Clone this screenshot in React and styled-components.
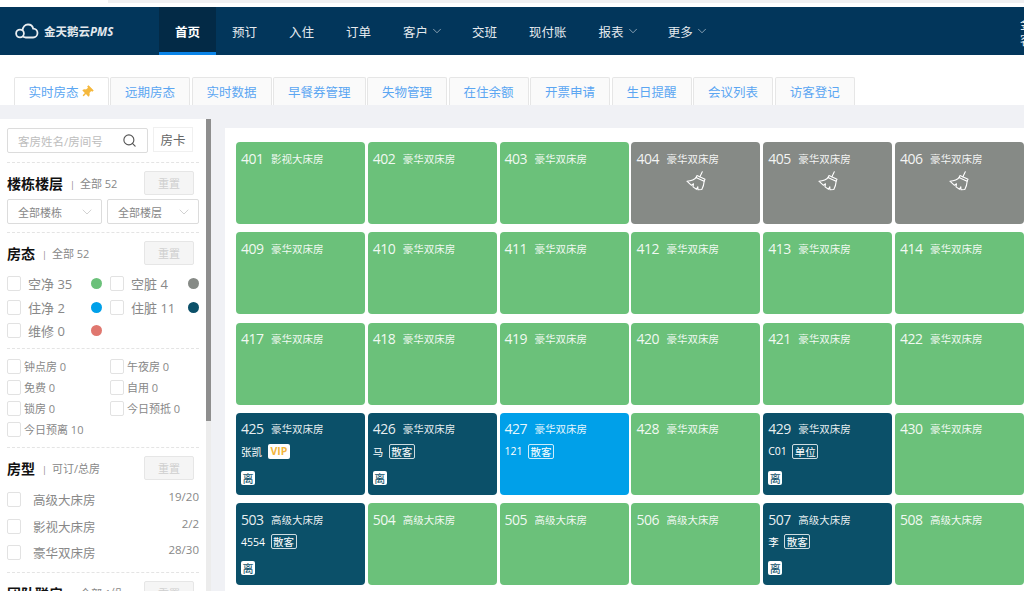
import React from 'react'
import styled, { createGlobalStyle } from 'styled-components'
import { ChevronDown, Search } from 'lucide-react'
import { FaThumbtack } from 'react-icons/fa'

const GlobalStyle = createGlobalStyle`
  html, body {
    margin: 0;
    padding: 0;
    background: #fff;
    font-family: "Open Sans", "Noto Sans CJK SC", sans-serif;
  }
  * { box-sizing: border-box; }
`

const colors = {
  clean: '#6bc17a',
  dirty: '#868a86',
  occupied: '#00a0e9',
  occupiedDirty: '#0b5069',
  repair: '#e0776f',
}

const Page = styled.div`
  width: 1024px;
  height: 591px;
  overflow: hidden;
  display: flex;
  flex-direction: column;
  background: #f0f1f5;
`

const TopStrip = styled.div`
  height: 7px;
  flex: none;
  background: #fff;
`

const StripLine = styled.div`
  height: 3px;
  margin-left: 108px;
  background: #f0f0f2;
`

const Nav = styled.div`
  height: 48px;
  flex: none;
  display: flex;
  background: #02365b;
  color: #e6ebef;
`

const Logo = styled.div`
  width: 159px;
  flex: none;
  padding-left: 15px;
  display: flex;
  align-items: center;
  gap: 5px;
  font-size: 11.5px;
  font-weight: 700;
  color: #e4e9ed;
  white-space: nowrap;
  em { font-style: italic; }
`

const NavItem = styled.div`
  height: 48px;
  padding: 0 16px;
  display: flex;
  align-items: center;
  gap: 3px;
  font-size: 12.5px;
  white-space: nowrap;
  svg { margin: 0 -4px 0 -1px; }
  ${p => p.$active && `
    background: #032a46;
    border-bottom: 3px solid #0a84e8;
    padding-top: 3px;
    font-weight: 700;
    color: #fff;
  `}
`

const NavUser = styled.div`
  margin-left: auto;
  width: 4px;
  padding-top: 10px;
  font-size: 12.5px;
  line-height: 16px;
  overflow: hidden;
  white-space: nowrap;
  display: flex;
  flex-direction: column;
`

const TabBar = styled.div`
  height: 50px;
  flex: none;
  background: #fff;
  padding: 22px 0 0 13.5px;
  display: flex;
  gap: 1.5px;
`

const Tab = styled.div`
  height: 28px;
  padding: 0 14px;
  display: flex;
  align-items: center;
  gap: 2px;
  font-size: 12.5px;
  color: #5ba6f2;
  white-space: nowrap;
  background: ${p => (p.$active ? '#fff' : '#fafafa')};
  border: 1px solid #e6e6e6;
  border-bottom: none;
  border-radius: 2px 2px 0 0;
  ${p => p.$active && 'width: 95px;'}
`

const Body = styled.div`
  flex: 1;
  min-height: 0;
  display: flex;
  padding-top: 14px;
`

const Sidebar = styled.div`
  width: 206px;
  flex: none;
  height: 472px;
  background: #fff;
  padding: 8px 7px 0;
  overflow: hidden;
`

const ScrollTrack = styled.div`
  width: 5px;
  height: 472px;
  flex: none;
  background: #ececec;
`

const ScrollThumb = styled.div`
  height: 302px;
  background: #8e8e8e;
`

const SearchRow = styled.div`
  display: flex;
  gap: 5px;
  padding-bottom: 9px;
  border-bottom: 1px dashed #e4e4e4;
`

const SearchBox = styled.div`
  width: 141px;
  height: 25px;
  margin-top: 1px;
  padding: 0 10px;
  display: flex;
  align-items: center;
  justify-content: space-between;
  font-size: 11.5px;
  color: #bdbdbd;
  border: 1px solid #dcdcdc;
  border-radius: 2px;
  svg { color: #555; }
`

const CardButton = styled.div`
  width: 40px;
  height: 25px;
  display: flex;
  align-items: center;
  justify-content: center;
  font-size: 12.5px;
  color: #666;
  border: 1px solid #f0f0f0;
`

const Section = styled.div`
  padding: ${p => p.$top || 8}px 0 ${p => p.$bottom || 8}px;
  border-bottom: 1px dashed #e4e4e4;
`

const SectionHead = styled.div`
  display: flex;
  align-items: center;
  height: 24px;
  padding-right: 5px;
`

const SectionTitle = styled.div`
  font-size: 14px;
  font-weight: 700;
  color: #111;
  white-space: nowrap;
`

const SectionNote = styled.div`
  margin-left: 7px;
  font-size: 11px;
  color: #888;
  white-space: nowrap;
  &::before {
    content: '|';
    margin-right: 5px;
    color: #888;
    font-size: 9px;
  }
`

const ResetButton = styled.div`
  margin-left: auto;
  width: 50px;
  height: 24px;
  flex: none;
  display: flex;
  align-items: center;
  justify-content: center;
  font-size: 11px;
  color: #cfcfcf;
  background: #f5f5f5;
  border: 1px solid #e6e6e6;
  border-radius: 2px;
`

const SelectRow = styled.div`
  display: flex;
  gap: 5px;
  margin-top: 4px;
`

const Select = styled.div`
  width: ${p => p.$w}px;
  height: 25px;
  padding: 0 6px 0 10px;
  display: flex;
  align-items: center;
  justify-content: space-between;
  font-size: 11px;
  color: #888;
  border: 1px solid #dcdcdc;
  border-radius: 2px;
  svg { color: #bbb; }
`

const StatusGrid = styled.div`
  display: grid;
  grid-template-columns: 103px 89px;
  margin-top: ${p => p.$top || 0}px;
`

const CheckRow = styled.div`
  display: flex;
  align-items: center;
  height: ${p => p.$h}px;
  font-size: ${p => p.$size}px;
  color: #888;
  white-space: nowrap;
`

const Box = styled.span`
  width: 14px;
  height: 15px;
  flex: none;
  margin-right: ${p => p.$gap}px;
  background: #fff;
  border: 1px solid #e2e2e2;
  border-radius: 2px;
`

const Dot = styled.span`
  width: 11px;
  height: 11px;
  margin-left: auto;
  margin-right: ${p => p.$right}px;
  border-radius: 50%;
  background: ${p => p.$color};
`

const TypeList = styled.div`
  margin-top: 7px;
`

const TypeRow = styled.div`
  display: flex;
  align-items: center;
  height: 26.5px;
  font-size: 12.5px;
  color: #888;
  white-space: nowrap;
`

const TypeCount = styled.span`
  margin-left: auto;
  margin-top: -6px;
  font-size: 11.5px;
  color: #888;
`

const Main = styled.div`
  margin: 9px 0 0 14px;
  flex: 1;
  min-width: 0;
  background: #fff;
  padding: 14px 0 0 11px;
  overflow: hidden;
`

const Grid = styled.div`
  display: grid;
  grid-template-columns: repeat(6, 129px);
  grid-auto-rows: 82px;
  column-gap: 2.8px;
  row-gap: 8.3px;
`

const Card = styled.div`
  padding: 7px 5px 0;
  display: flex;
  flex-direction: column;
  color: #fff;
  background: ${p => colors[p.$status]};
  border-radius: 4px;
  overflow: hidden;
`

const CardHead = styled.div`
  display: flex;
  align-items: center;
  height: 18px;
  white-space: nowrap;
`

const RoomNumber = styled.span`
  width: 30px;
  font-size: 14px;
  letter-spacing: -0.5px;
  color: rgba(255, 255, 255, 0.92);
`

const RoomType = styled.span`
  font-size: 10.5px;
  color: rgba(255, 255, 255, 0.92);
`

const GuestRow = styled.div`
  display: flex;
  align-items: center;
  gap: 5.5px;
  height: 15px;
  margin-top: 6px;
  font-size: 10.5px;
  white-space: nowrap;
`

const GuestTag = styled.span`
  height: 14.5px;
  padding: 0 1.5px;
  display: flex;
  align-items: center;
  font-size: 10.5px;
  border: 1px solid rgba(255, 255, 255, 0.8);
  border-radius: 2px;
`

const VipTag = styled.span`
  height: 14.5px;
  padding: 0 3px;
  display: flex;
  align-items: center;
  font-size: 10.5px;
  font-weight: 700;
  color: #f2b53c;
  background: #fff;
  border-radius: 2px;
`

const LeaveTag = styled.span`
  width: 14px;
  height: 14px;
  margin-top: 12px;
  display: flex;
  align-items: center;
  justify-content: center;
  font-size: 11px;
  color: #0b5069;
  background: #fff;
  border-radius: 2px;
`

const BroomWrap = styled.div`
  display: flex;
  justify-content: center;
  margin-top: 4px;
`

const CloudLogo = () => (
  <svg width="24" height="16" viewBox="0 0 24 16" fill="none" stroke="#e9edf0" strokeWidth="1.8">
    <circle cx="5" cy="10.5" r="3.9" />
    <path d="M7.5 7.5c.3-3.5 2.6-6 5.5-6 2.8 0 4.7 1.8 5.2 4.2 2.5 0 4.3 1.9 4.3 4.4 0 2.5-1.9 4.4-4.4 4.4h-7.4c-1.5 0-2.6-.7-3.2-1.7" />
  </svg>
)

const Broom = () => (
  <svg width="20" height="20" viewBox="0 0 20 20" fill="none" stroke="#fff" strokeWidth="1.1" strokeLinejoin="round" strokeLinecap="round">
    <path d="M16.3.8l-2.4 4.9" />
    <path d="M11 4.6l8 3.7-1 2-8-3.7z" />
    <path d="M10.6 6.2C8.5 8.8 5 10 .9 10.2l4.6 4.1 2-1.5-.5 3.1 3.5 2.4 1.3-2.5.2 3 3.8-.3c1.500-2.900 2.200-5.500 2.400-8.400" />
  </svg>
)

const navItems = [
  { label: '首页', active: true },
  { label: '预订' },
  { label: '入住' },
  { label: '订单' },
  { label: '客户', menu: true },
  { label: '交班' },
  { label: '现付账' },
  { label: '报表', menu: true },
  { label: '更多', menu: true },
]

const tabs = ['远期房态', '实时数据', '早餐券管理', '失物管理', '在住余额', '开票申请', '生日提醒', '会议列表', '访客登记']

const statuses = [
  { label: '空净 35', color: colors.clean, right: 8 },
  { label: '空脏 4', color: colors.dirty, right: 0 },
  { label: '住净 2', color: colors.occupied, right: 8 },
  { label: '住脏 11', color: colors.occupiedDirty, right: 0 },
  { label: '维修 0', color: colors.repair, right: 8 },
]

const extras = ['钟点房 0', '午夜房 0', '免费 0', '自用 0', '锁房 0', '今日预抵 0', '今日预离 10']

const roomTypes = [
  ['高级大床房', '19/20'],
  ['影视大床房', '2/2'],
  ['豪华双床房', '28/30'],
]

const DOUBLE = '豪华双床房'
const KING = '高级大床房'

const rooms = [
  { no: 401, type: '影视大床房' },
  { no: 402, type: DOUBLE },
  { no: 403, type: DOUBLE },
  { no: 404, type: DOUBLE, status: 'dirty' },
  { no: 405, type: DOUBLE, status: 'dirty' },
  { no: 406, type: DOUBLE, status: 'dirty' },
  ...[409, 410, 411, 412, 413, 414, 417, 418, 419, 420, 421, 422].map(no => ({ no, type: DOUBLE })),
  { no: 425, type: DOUBLE, status: 'occupiedDirty', guest: '张凯', vip: true, leave: true },
  { no: 426, type: DOUBLE, status: 'occupiedDirty', guest: '马', tag: '散客', leave: true },
  { no: 427, type: DOUBLE, status: 'occupied', guest: '121', tag: '散客' },
  { no: 428, type: DOUBLE },
  { no: 429, type: DOUBLE, status: 'occupiedDirty', guest: 'C01', tag: '单位', leave: true },
  { no: 430, type: DOUBLE },
  { no: 503, type: KING, status: 'occupiedDirty', guest: '4554', tag: '散客', leave: true },
  { no: 504, type: KING },
  { no: 505, type: KING },
  { no: 506, type: KING },
  { no: 507, type: KING, status: 'occupiedDirty', guest: '李', tag: '散客', leave: true },
  { no: 508, type: KING },
]

function RoomCard({ room }) {
  const status = room.status || 'clean'
  return (
    <Card $status={status}>
      <CardHead>
        <RoomNumber>{room.no}</RoomNumber>
        <RoomType>{room.type}</RoomType>
      </CardHead>
      {status === 'dirty' && (
        <BroomWrap>
          <Broom />
        </BroomWrap>
      )}
      {room.guest && (
        <GuestRow>
          {room.guest}
          {room.vip && <VipTag>VIP</VipTag>}
          {room.tag && <GuestTag>{room.tag}</GuestTag>}
        </GuestRow>
      )}
      {room.leave && <LeaveTag>离</LeaveTag>}
    </Card>
  )
}

export default function App() {
  return (
    <>
      <GlobalStyle />
      <Page>
        <TopStrip>
          <StripLine />
        </TopStrip>
        <Nav>
          <Logo>
            <CloudLogo />
            <span>
              金天鹅云<em>PMS</em>
            </span>
          </Logo>
          {navItems.map(item => (
            <NavItem key={item.label} $active={item.active}>
              {item.label}
              {item.menu && <ChevronDown size={14} strokeWidth={1} />}
            </NavItem>
          ))}
          <NavUser>
            <span>金</span>
            <span>客</span>
          </NavUser>
        </Nav>
        <TabBar>
          <Tab $active>
            实时房态
            <FaThumbtack size={12} color="#f5b83d" style={{ transform: 'rotate(45deg)' }} />
          </Tab>
          {tabs.map(tab => (
            <Tab key={tab}>{tab}</Tab>
          ))}
        </TabBar>
        <Body>
          <Sidebar>
            <SearchRow>
              <SearchBox>
                客房姓名/房间号
                <Search size={15} strokeWidth={1.8} />
              </SearchBox>
              <CardButton>房卡</CardButton>
            </SearchRow>
            <Section>
              <SectionHead>
                <SectionTitle>楼栋楼层</SectionTitle>
                <SectionNote>全部 52</SectionNote>
                <ResetButton>重置</ResetButton>
              </SectionHead>
              <SelectRow>
                <Select $w={95}>
                  全部楼栋
                  <ChevronDown size={16} strokeWidth={1} />
                </Select>
                <Select $w={92}>
                  全部楼层
                  <ChevronDown size={16} strokeWidth={1} />
                </Select>
              </SelectRow>
            </Section>
            <Section $bottom={5}>
              <SectionHead>
                <SectionTitle>房态</SectionTitle>
                <SectionNote>全部 52</SectionNote>
                <ResetButton>重置</ResetButton>
              </SectionHead>
              <StatusGrid $top={7}>
                {statuses.map(s => (
                  <CheckRow key={s.label} $h={23.5} $size={13}>
                    <Box $gap={7} />
                    {s.label}
                    <Dot $color={s.color} $right={s.right} />
                  </CheckRow>
                ))}
              </StatusGrid>
            </Section>
            <Section $top={7} $bottom={7}>
              <StatusGrid>
                {extras.map(label => (
                  <CheckRow key={label} $h={21} $size={11}>
                    <Box $gap={3} />
                    {label}
                  </CheckRow>
                ))}
              </StatusGrid>
            </Section>
            <Section $bottom={6}>
              <SectionHead>
                <SectionTitle>房型</SectionTitle>
                <SectionNote>可订/总房</SectionNote>
                <ResetButton>重置</ResetButton>
              </SectionHead>
              <TypeList>
                {roomTypes.map(([name, count]) => (
                  <TypeRow key={name}>
                    <Box $gap={12} />
                    {name}
                    <TypeCount>{count}</TypeCount>
                  </TypeRow>
                ))}
              </TypeList>
            </Section>
            <Section>
              <SectionHead>
                <SectionTitle>团队联房</SectionTitle>
                <SectionNote>全部 1组</SectionNote>
                <ResetButton>重置</ResetButton>
              </SectionHead>
            </Section>
          </Sidebar>
          <ScrollTrack>
            <ScrollThumb />
          </ScrollTrack>
          <Main>
            <Grid>
              {rooms.map(room => (
                <RoomCard key={room.no} room={room} />
              ))}
            </Grid>
          </Main>
        </Body>
      </Page>
    </>
  )
}
